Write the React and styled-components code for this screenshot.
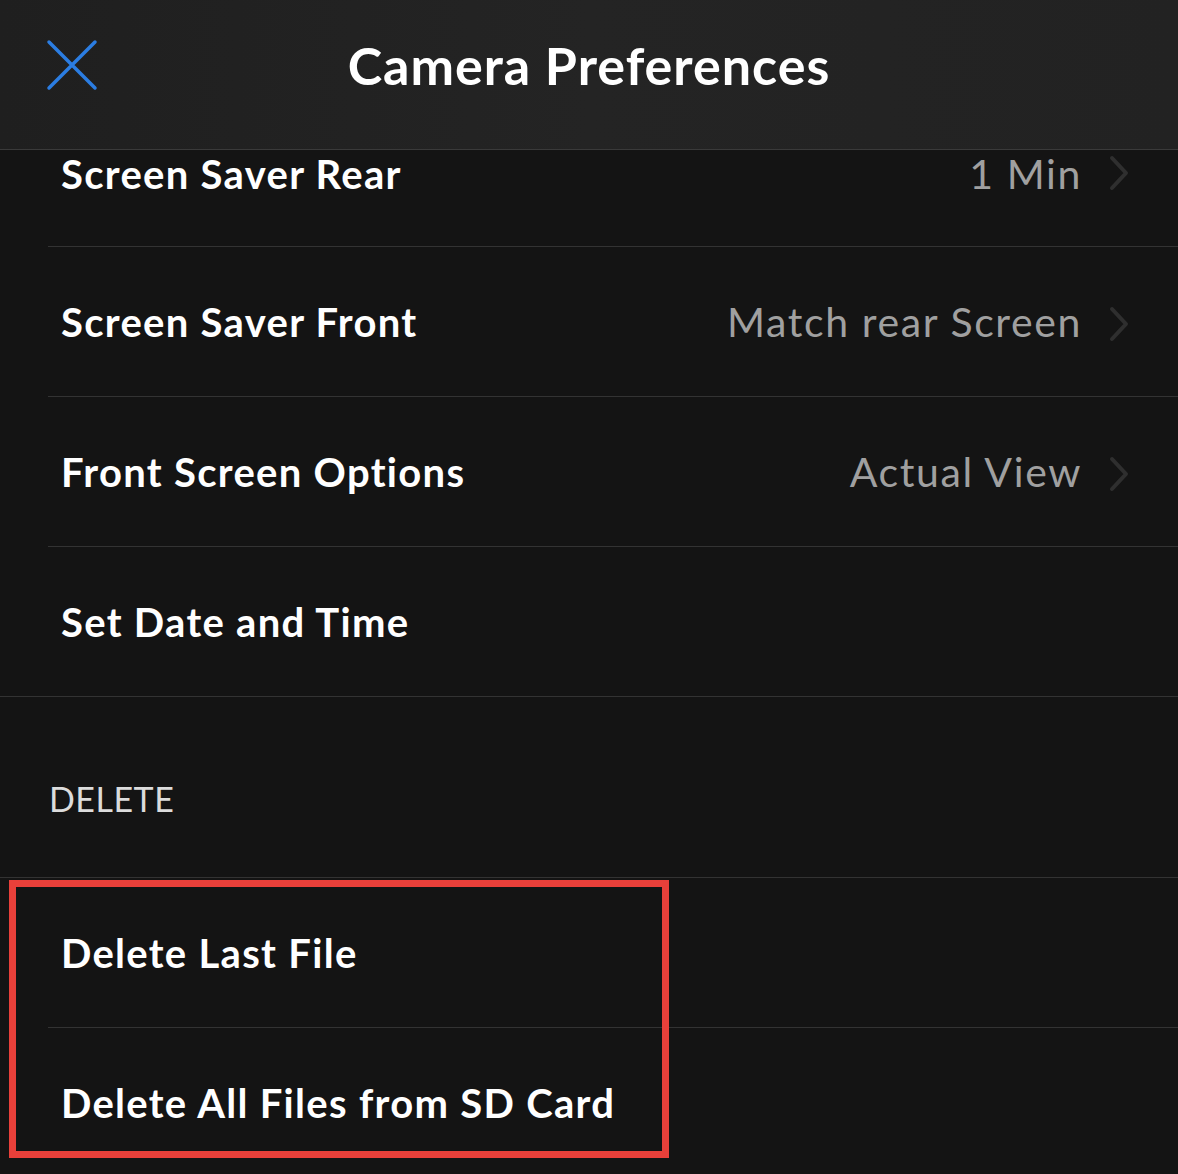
import React from 'react';
import styled, { createGlobalStyle } from 'styled-components';

const GlobalStyle = createGlobalStyle`
  html, body {
    margin: 0;
    padding: 0;
    background: #141414;
  }
  body {
    font-family: Lato, "Noto Sans", sans-serif;
    -webkit-font-smoothing: antialiased;
  }
`;

const Screen = styled.div`
  position: relative;
  width: 1178px;
  height: 1174px;
  overflow: hidden;
  background: #141414;
  display: flex;
  flex-direction: column;
`;

const Header = styled.header`
  flex: 0 0 149px;
  display: grid;
  grid-template-columns: 140px 1fr 140px;
  align-items: center;
  background: linear-gradient(90deg, #1f1f1f 0%, #242424 50%, #222 100%);
  border-bottom: 1px solid #3a3a3a;
`;

const CloseButton = styled.button`
  justify-self: start;
  margin-left: 46px;
  margin-top: -20px;
  width: 52px;
  height: 52px;
  padding: 0;
  border: 0;
  background: none;
  display: flex;
  align-items: center;
  justify-content: center;
  cursor: pointer;
`;

const Title = styled.h1`
  margin: -20px 0 0;
  text-align: center;
  color: #fff;
  font-size: 52px;
  font-weight: 700;
  letter-spacing: 1px;
`;

const List = styled.div`
  flex: 1;
`;

/* the first row is scrolled partly under the header */
const Row = styled.div`
  height: ${(p) => (p.$peek ? '97px' : '150px')};
  box-sizing: border-box;
  margin-left: ${(p) => (p.$full ? '0' : '48px')};
  padding: 0 48px 0 ${(p) => (p.$full ? '61px' : '13px')};
  display: flex;
  align-items: ${(p) => (p.$peek ? 'flex-start' : 'center')};
  border-bottom: 1px solid #333;
`;

const Label = styled.span`
  flex: 1;
  color: #fff;
  font-size: 40px;
  line-height: 48px;
  font-weight: 700;
  letter-spacing: 1.3px;
`;

const Value = styled.span`
  color: #a0a0a0;
  font-size: 41px;
  line-height: 48px;
  font-weight: 400;
  letter-spacing: 1.6px;
  margin-right: 26px;
`;

const Chevron = styled.svg`
  width: 22px;
  height: 36px;
  margin-top: 5px;
  flex: none;
`;

const SectionHeader = styled.div`
  height: 181px;
  box-sizing: border-box;
  padding: 81px 0 0 49px;
  border-bottom: 1px solid #333;
  color: #dcdcdc;
  font-size: 34px;
  font-weight: 400;
  letter-spacing: 0.5px;
  line-height: 42px;
`;

const Highlight = styled.div`
  position: absolute;
  left: 9px;
  top: 880px;
  width: 660px;
  height: 278px;
  box-sizing: border-box;
  border: 7px solid #e9403a;
  pointer-events: none;
`;

const settings = [
  { label: 'Screen Saver Rear', value: '1 Min', peek: true },
  { label: 'Screen Saver Front', value: 'Match rear Screen' },
  { label: 'Front Screen Options', value: 'Actual View' },
  { label: 'Set Date and Time', full: true },
];

const deletes = ['Delete Last File', 'Delete All Files from SD Card'];

const ChevronIcon = () => (
  <Chevron viewBox="0 0 22 36">
    <path d="M4 3 L18 18 L4 33" fill="none" stroke="#2f2f2f" strokeWidth="4" strokeLinecap="round" strokeLinejoin="round" />
  </Chevron>
);

const App = () => (
  <Screen>
    <GlobalStyle />
    <Header>
      <CloseButton aria-label="Close">
        <svg width="52" height="52" viewBox="0 0 52 52">
          <path d="M3 3 L49 49 M49 3 L3 49" stroke="#2b7de2" strokeWidth="3.5" strokeLinecap="round" />
        </svg>
      </CloseButton>
      <Title>Camera Preferences</Title>
      <div />
    </Header>
    <List>
      {settings.map((s) => (
        <Row key={s.label} $full={s.full} $peek={s.peek}>
          <Label>{s.label}</Label>
          {s.value && (
            <>
              <Value>{s.value}</Value>
              <ChevronIcon />
            </>
          )}
        </Row>
      ))}
      <SectionHeader>DELETE</SectionHeader>
      {deletes.map((d) => (
        <Row key={d}>
          <Label>{d}</Label>
        </Row>
      ))}
    </List>
    <Highlight />
  </Screen>
);

export default App;
